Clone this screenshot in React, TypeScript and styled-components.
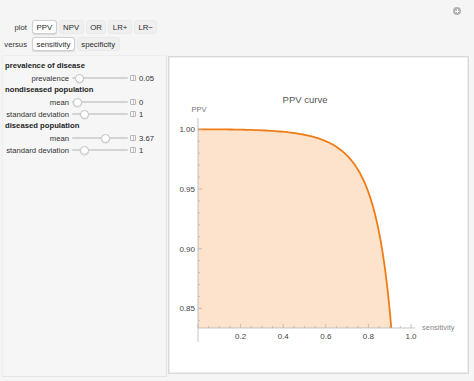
import React from 'react'
import styled, { createGlobalStyle } from 'styled-components'

const GlobalStyle = createGlobalStyle`
  html, body {
    margin: 0;
    padding: 0;
    background: #f5f5f5;
  }
  body {
    font-family: 'Liberation Sans', Arial, sans-serif;
    color: #2a2a2a;
  }
`

// standard normal cdf (erfc with Chebyshev fit, good in the tails)
const erfc = (x: number) => {
  const z = Math.abs(x)
  const t = 1 / (1 + 0.5 * z)
  const r =
    t *
    Math.exp(
      -z * z - 1.26551223 +
        t * (1.00002368 + t * (0.37409196 + t * (0.09678418 + t * (-0.18628806 +
        t * (0.27886807 + t * (-1.13520398 + t * (1.48851587 + t * (-0.82215223 + t * 0.17087277))))))))
    )
  return x >= 0 ? r : 2 - r
}
const Phi = (x: number) => 0.5 * erfc(-x / Math.SQRT2)

const params = { prevalence: 0.05, mean0: 0, sd0: 1, mean1: 3.67, sd1: 1 }

const sensAt = (t: number) => Phi((params.mean1 - t) / params.sd1)
const ppvAt = (t: number) => {
  const p = params.prevalence
  const tp = p * sensAt(t)
  const fp = (1 - p) * Phi((params.mean0 - t) / params.sd0)
  return tp / (tp + fp)
}

const plotButtons = ['PPV', 'NPV', 'OR', 'LR+', 'LR\u2212']
const versusButtons = ['sensitivity', 'specificity']

type SliderSpec = { label: string; value: number; min: number; max: number; text: string }
type Group = { title: string; sliders: SliderSpec[] }

const groups: Group[] = [
  { title: 'prevalence of disease', sliders: [{ label: 'prevalence', value: 0.05, min: 0, max: 0.4, text: '0.05' }] },
  {
    title: 'nondiseased population',
    sliders: [
      { label: 'mean', value: 0, min: -0.5, max: 5, text: '0' },
      { label: 'standard deviation', value: 1, min: 0.1, max: 4, text: '1' },
    ],
  },
  {
    title: 'diseased population',
    sliders: [
      { label: 'mean', value: 3.67, min: 0, max: 6.2, text: '3.67' },
      { label: 'standard deviation', value: 1, min: 0.1, max: 4, text: '1' },
    ],
  },
]

// chart geometry (svg coords)
const X0 = 29
const XW = 213
const Y1 = 72.3
const PER = 1194
const YMIN = 0.8336
const sx = (s: number) => X0 + XW * s
const sy = (v: number) => Y1 + (1 - v) * PER
const YB = sy(YMIN)

const buildCurve = () => {
  let lo = 0
  let hi = 10
  for (let i = 0; i < 60; i++) {
    const mid = (lo + hi) / 2
    if (ppvAt(mid) < YMIN) lo = mid
    else hi = mid
  }
  const tEnd = hi
  const tStart = params.mean1 + 6
  const pts: [number, number][] = [[sx(0), sy(1)]]
  const n = 240
  for (let i = 0; i <= n; i++) {
    const t = tStart + ((tEnd - tStart) * i) / n
    pts.push([sx(sensAt(t)), sy(ppvAt(t))])
  }
  const line = pts.map((p, i) => `${i ? 'L' : 'M'}${p[0].toFixed(2)},${p[1].toFixed(2)}`).join(' ')
  const last = pts[pts.length - 1]
  const area = `M${sx(0)},${YB} ${line.replace('M', 'L')} L${last[0].toFixed(2)},${YB} Z`
  return { line, area }
}

const Chart: React.FC = () => {
  const { line, area } = buildCurve()
  const yTicks: number[] = []
  for (let k = 84; k <= 100; k++) yTicks.push(k / 100)
  const xTicks: number[] = []
  for (let k = 0; k <= 20; k++) xTicks.push(k / 20)
  return (
    <svg width="299" height="316" viewBox="0 0 299 316">
      <text x="136" y="46" textAnchor="middle" fontSize="9.5" fill="#555">PPV curve</text>
      <text x="30" y="55" textAnchor="middle" fontSize="7.5" fill="#777">PPV</text>
      <path d={area} fill="#fde3cb" />
      <path d={line} fill="none" stroke="#f07c17" strokeWidth="1.8" strokeLinejoin="round" />
      <line x1={X0} y1="61" x2={X0} y2="285" stroke="#b5b5b5" strokeWidth="0.8" />
      <line x1={X0} y1={YB} x2="246" y2={YB} stroke="#b5b5b5" strokeWidth="0.8" />
      {yTicks.map((v) => {
        const major = Math.round(v * 100) % 5 === 0
        return (
          <line key={v} x1={X0} y1={sy(v)} x2={X0 + (major ? 4 : 2)} y2={sy(v)} stroke="#b5b5b5" strokeWidth="0.8" />
        )
      })}
      {[1, 0.95, 0.9, 0.85].map((v) => (
        <text key={v} x="26" y={sy(v) + 3} textAnchor="end" fontSize="8" fill="#444">{v.toFixed(2)}</text>
      ))}
      {xTicks.map((s) => {
        const major = Math.round(s * 20) % 4 === 0
        return (
          <line key={s} x1={sx(s)} y1={YB} x2={sx(s)} y2={YB - (major ? 4 : 2)} stroke="#b5b5b5" strokeWidth="0.8" />
        )
      })}
      {[0.2, 0.4, 0.6, 0.8, 1.0].map((s) => (
        <text key={s} x={sx(s)} y={YB + 11} textAnchor="middle" fontSize="8" fill="#444">{s.toFixed(1)}</text>
      ))}
      <text x="253" y={YB + 2.5} fontSize="7.5" fill="#888">sensitivity</text>
    </svg>
  )
}

const Slider: React.FC<{ spec: SliderSpec }> = ({ spec }) => {
  const frac = (spec.value - spec.min) / (spec.max - spec.min)
  return (
    <SliderRow>
      <SliderLabel>{spec.label}</SliderLabel>
      <Track>
        <Thumb style={{ left: `${frac * 100}%` }} />
      </Track>
      <PlusBox />
      <Value>{spec.text}</Value>
    </SliderRow>
  )
}

const App: React.FC = () => {
  return (
    <Page>
      <GlobalStyle />
      <AddIcon />
      <Controls>
        <ButtonRow>
          <RowLabel>plot</RowLabel>
          {plotButtons.map((b, i) => (
            <Toggle key={b} $active={i === 0}>{b}</Toggle>
          ))}
        </ButtonRow>
        <ButtonRow>
          <RowLabel>versus</RowLabel>
          {versusButtons.map((b, i) => (
            <Toggle key={b} $active={i === 0}>{b}</Toggle>
          ))}
        </ButtonRow>
      </Controls>
      <Main>
        <SidePanel>
          {groups.map((g) => (
            <React.Fragment key={g.title}>
              <Heading>{g.title}</Heading>
              {g.sliders.map((s, i) => (
                <Slider key={i} spec={s} />
              ))}
            </React.Fragment>
          ))}
        </SidePanel>
        <PlotPanel>
          <Chart />
        </PlotPanel>
      </Main>
    </Page>
  )
}

export default App

const Page = styled.div`
  position: relative;
  width: 474px;
  height: 381px;
  overflow: hidden;
  background: #f5f5f5;
`

const AddIcon = styled.div`
  position: absolute;
  top: 7px;
  left: 453px;
  width: 8px;
  height: 8px;
  border-radius: 50%;
  background: #b4b4b4;
  &::before,
  &::after {
    content: '';
    position: absolute;
    background: #fff;
  }
  &::before {
    left: 2px;
    top: 3.5px;
    width: 4px;
    height: 1px;
  }
  &::after {
    left: 3.5px;
    top: 2px;
    width: 1px;
    height: 4px;
  }
`

const Controls = styled.div`
  display: flex;
  flex-direction: column;
  gap: 3px;
  padding-top: 20px;
  height: 35px;
`

const ButtonRow = styled.div`
  display: flex;
  align-items: center;
  gap: 2px;
  height: 14px;
`

const RowLabel = styled.span`
  width: 27px;
  margin-right: 3px;
  text-align: right;
  font-size: 7.7px;
  color: #333;
`

const Toggle = styled.div<{ $active?: boolean }>`
  display: flex;
  align-items: center;
  height: 14px;
  box-sizing: border-box;
  padding: 0 3.5px;
  font-size: 7.8px;
  color: #2a2a2a;
  border-radius: 3px;
  background: ${(p) => (p.$active ? '#ffffff' : '#efefef')};
  border: 1px solid ${(p) => (p.$active ? '#cfcfcf' : '#eaeaea')};
  box-shadow: ${(p) => (p.$active ? '0 0.5px 1px rgba(0,0,0,0.12)' : 'none')};
`

const Main = styled.div`
  display: flex;
  align-items: flex-start;
  padding-left: 2px;
  gap: 1px;
`

const SidePanel = styled.div`
  width: 165px;
  height: 322px;
  box-sizing: border-box;
  padding: 4px 0 0 2px;
  border: 1px solid #eeeeee;
  border-right-color: #e4e4e4;
  border-bottom-color: #e4e4e4;
  background: #f6f6f6;
  display: flex;
  flex-direction: column;
`

const Heading = styled.div`
  height: 12px;
  line-height: 12px;
  font-size: 7.7px;
  font-weight: 700;
  color: #1e1e1e;
  white-space: nowrap;
`

const SliderRow = styled.div`
  display: flex;
  align-items: center;
  height: 12px;
`

const SliderLabel = styled.span`
  width: 64px;
  margin-right: 3px;
  text-align: right;
  font-size: 7.7px;
  color: #333;
  white-space: nowrap;
`

const Track = styled.div`
  position: relative;
  width: 56px;
  height: 1.5px;
  background: #d4d4d4;
  border-radius: 1px;
`

const Thumb = styled.div`
  position: absolute;
  top: 50%;
  width: 7px;
  height: 7px;
  margin: -4.5px 0 0 -4.5px;
  border-radius: 50%;
  background: #fff;
  border: 1px solid #c6c6c6;
  box-shadow: 0 0.5px 1px rgba(0, 0, 0, 0.15);
`

const PlusBox = styled.div`
  position: relative;
  width: 4px;
  height: 4px;
  margin: 0 3px 0 2px;
  border: 1px solid #b8b8b8;
  border-radius: 1px;
  &::after {
    content: '';
    position: absolute;
    left: 1.5px;
    top: 0;
    width: 1px;
    height: 4px;
    background: #c8c8c8;
  }
`

const Value = styled.span`
  font-size: 7.7px;
  color: #333;
`

const PlotPanel = styled.div`
  width: 301px;
  height: 318px;
  margin-top: 1px;
  box-sizing: border-box;
  background: #fff;
  border: 1px solid #d9d9d9;
  box-shadow: inset 0 0 0 1px #eeeeee;
  display: flex;
`
